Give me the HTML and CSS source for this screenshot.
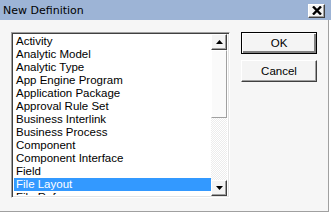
FILE: index.html
```html
<!DOCTYPE html>
<html lang="en">
<head>
    <meta charset="UTF-8">
    <title>New Definition</title>
    <link rel="stylesheet" href="styles.css">
</head>
<body>
    <div class="window">
        <div class="title-bar">
            <div class="title">New Definition</div>
            <div class="close-button">
                <svg width="10" height="9" viewBox="0 0 10 9"><path d="M1 0.5 L9 8.5 M9 0.5 L1 8.5" stroke="#000" stroke-width="2.4"/></svg>
            </div>
        </div>

        <div class="dialog-body">
            <div class="listbox">
                <div class="list-items">
                    <div class="item">Activity</div>
                    <div class="item">Analytic Model</div>
                    <div class="item">Analytic Type</div>
                    <div class="item">App Engine Program</div>
                    <div class="item">Application Package</div>
                    <div class="item">Approval Rule Set</div>
                    <div class="item">Business Interlink</div>
                    <div class="item">Business Process</div>
                    <div class="item">Component</div>
                    <div class="item">Component Interface</div>
                    <div class="item">Field</div>
                    <div class="item selected">File Layout</div>
                    <div class="item">File Reference</div>
                </div>
                <div class="scrollbar">
                    <div class="scroll-btn">
                        <svg width="7" height="4" viewBox="0 0 7 4"><path d="M3.5 0 L7 4 L0 4 Z" fill="#000"/></svg>
                    </div>
                    <div class="scroll-track">
                        <div class="scroll-thumb"></div>
                    </div>
                    <div class="scroll-btn">
                        <svg width="7" height="4" viewBox="0 0 7 4"><path d="M0 0 L7 0 L3.5 4 Z" fill="#000"/></svg>
                    </div>
                </div>
            </div>

            <div class="buttons">
                <button class="btn default">OK</button>
                <button class="btn">Cancel</button>
            </div>
        </div>
    </div>
</body>
</html>
```

FILE: styles.css
```css
* {
    margin: 0;
    padding: 0;
    box-sizing: border-box;
    font-family: 'Liberation Sans', Arial, sans-serif;
}

body {
    width: 331px;
    height: 214px;
    background-color: #ffffff;
    overflow: hidden;
}

.window {
    width: 331px;
    height: 214px;
    display: flex;
    flex-direction: column;
}

.title-bar {
    height: 20px;
    background-color: #9db4d6;
    display: flex;
    align-items: center;
    justify-content: space-between;
    padding: 0 6px 0 3px;
}

.title {
    font-family: 'DejaVu Sans', sans-serif;
    font-size: 11px;
    color: #000000;
}

.close-button {
    width: 17px;
    height: 14px;
    margin-top: 1px;
    background-color: #f4f4f4;
    border-top: 1px solid #ffffff;
    border-left: 1px solid #ffffff;
    border-right: 1px solid #404040;
    border-bottom: 1px solid #404040;
    box-shadow: inset -1px -1px 0 #a0a0a0;
    display: flex;
    align-items: center;
    justify-content: center;
}

.dialog-body {
    width: 329px;
    height: 192px;
    background-color: #f6f6f6;
    border-right: 1px solid #a0a0a0;
    border-bottom: 1px solid #a0a0a0;
    display: flex;
    align-items: flex-start;
    padding: 12px 0 0 11px;
}

.listbox {
    width: 219px;
    height: 166px;
    background-color: #ffffff;
    border-top: 1px solid #a0a0a0;
    border-left: 1px solid #a0a0a0;
    border-right: 1px solid #ffffff;
    border-bottom: 1px solid #ffffff;
    box-shadow: inset 1px 1px 0 #404040, inset -1px -1px 0 #e4e4e4;
    display: flex;
    padding: 2px;
}

.list-items {
    flex: 1;
    overflow: hidden;
}

.item {
    height: 13px;
    line-height: 13px;
    font-size: 11.5px;
    color: #000000;
    padding-left: 2px;
    white-space: nowrap;
}

.item.selected {
    background-color: #3399ff;
    color: #ffffff;
}

.scrollbar {
    width: 16px;
    display: flex;
    flex-direction: column;
    margin-top: -1px;
    margin-bottom: -1px;
}

.scroll-btn {
    width: 16px;
    height: 16px;
    flex-shrink: 0;
    background-color: #f4f4f4;
    border-top: 1px solid #ffffff;
    border-left: 1px solid #ffffff;
    border-right: 1px solid #404040;
    border-bottom: 1px solid #404040;
    box-shadow: inset -1px -1px 0 #a0a0a0;
    display: flex;
    align-items: center;
    justify-content: center;
}

.scroll-track {
    flex: 1;
    background-color: #f2f2f2;
    background-image: repeating-conic-gradient(#ffffff 0 25%, #ececec 0 50%);
    background-size: 2px 2px;
}

.scroll-thumb {
    height: 68px;
    background-color: #fafafa;
    border-top: 1px solid #ffffff;
    border-left: 1px solid #ffffff;
    border-right: 1px solid #a0a0a0;
    border-bottom: 1px solid #a0a0a0;
}

.buttons {
    display: flex;
    flex-direction: column;
    gap: 6px;
    margin-left: 11px;
}

.btn {
    width: 76px;
    height: 22px;
    background-color: #f4f4f4;
    border-top: 1px solid #ffffff;
    border-left: 1px solid #ffffff;
    border-right: 1px solid #404040;
    border-bottom: 1px solid #404040;
    box-shadow: inset -1px -1px 0 #a0a0a0;
    font-size: 11.5px;
    color: #000000;
}

.btn.default {
    border: 1px solid #000000;
    box-shadow: inset 1px 1px 0 #ffffff, inset -2px -2px 0 #808080;
}
```
